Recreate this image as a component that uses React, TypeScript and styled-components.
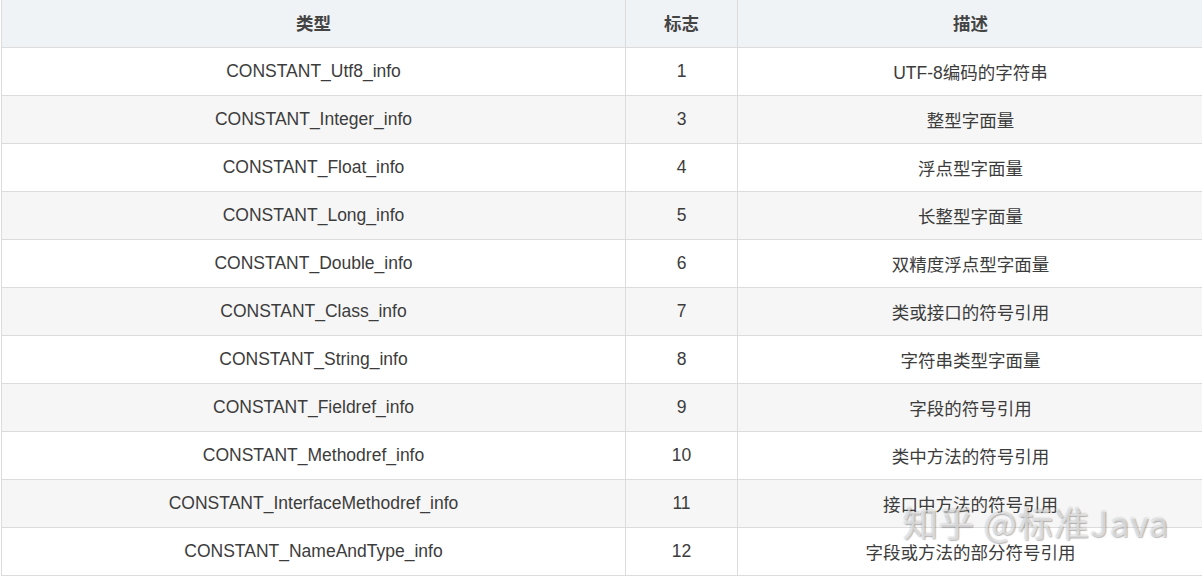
import React from "react";
import styled, { createGlobalStyle } from "styled-components";

const Global = createGlobalStyle`
  html, body { margin: 0; padding: 0; background: #fff; overflow: hidden; }
  body { font-family: "Liberation Sans", Arial, "Noto Sans CJK SC", sans-serif; }
`;

const Wrap = styled.div`
  position: relative;
  width: 1202px;
  height: 576px;
  overflow: hidden;
`;

const Table = styled.div`
  display: grid;
  grid-template-columns: 624px 112px 466px;
  width: max-content;
  margin-left: 1px;
  border-left: 1px solid #dcdcdc;
`;

const Cell = styled.div<{ $head?: boolean; $alt?: boolean }>`
  box-sizing: border-box;
  height: 48px;
  display: flex;
  align-items: center;
  justify-content: center;
  padding-bottom: ${(p) => (p.$head ? "3px" : "0")};
  border-bottom: 1px solid #dcdcdc;
  border-right: 1px solid #dcdcdc;
  background: ${(p) => (p.$head ? "#f0f3f6" : p.$alt ? "#f6f6f6" : "#ffffff")};
  color: ${(p) => (p.$head ? "#444" : "#3c3c3c")};
  font-size: 17.5px;
  font-weight: ${(p) => (p.$head ? 700 : 400)};
  font-family: "Liberation Sans", Arial, "Noto Sans CJK SC", sans-serif;
  white-space: nowrap;
`;

const Watermark = styled.div`
  position: absolute;
  left: 903px;
  top: 496px;
  font-family: "Noto Sans CJK SC", sans-serif;
  font-size: 35px;
  letter-spacing: 1px;
  color: rgba(255, 255, 255, 0.6);
  text-shadow: 0 0 2px rgba(0, 0, 0, 0.3), 1px 1px 1px rgba(0, 0, 0, 0.2);
  white-space: nowrap;
  pointer-events: none;
`;

const rows: [string, string, string][] = [
  ["CONSTANT_Utf8_info", "1", "UTF-8编码的字符串"],
  ["CONSTANT_Integer_info", "3", "整型字面量"],
  ["CONSTANT_Float_info", "4", "浮点型字面量"],
  ["CONSTANT_Long_info", "5", "长整型字面量"],
  ["CONSTANT_Double_info", "6", "双精度浮点型字面量"],
  ["CONSTANT_Class_info", "7", "类或接口的符号引用"],
  ["CONSTANT_String_info", "8", "字符串类型字面量"],
  ["CONSTANT_Fieldref_info", "9", "字段的符号引用"],
  ["CONSTANT_Methodref_info", "10", "类中方法的符号引用"],
  ["CONSTANT_InterfaceMethodref_info", "11", "接口中方法的符号引用"],
  ["CONSTANT_NameAndType_info", "12", "字段或方法的部分符号引用"],
];

export default function App() {
  return (
    <Wrap>
      <Global />
      <Table>
        <Cell $head>类型</Cell>
        <Cell $head>标志</Cell>
        <Cell $head>描述</Cell>
        {rows.map((r, i) => (
          <React.Fragment key={r[0]}>
            <Cell $alt={i % 2 === 1}>{r[0]}</Cell>
            <Cell $alt={i % 2 === 1}>{r[1]}</Cell>
            <Cell $alt={i % 2 === 1}>{r[2]}</Cell>
          </React.Fragment>
        ))}
      </Table>
      <Watermark>知乎 @标准Java</Watermark>
    </Wrap>
  );
}
